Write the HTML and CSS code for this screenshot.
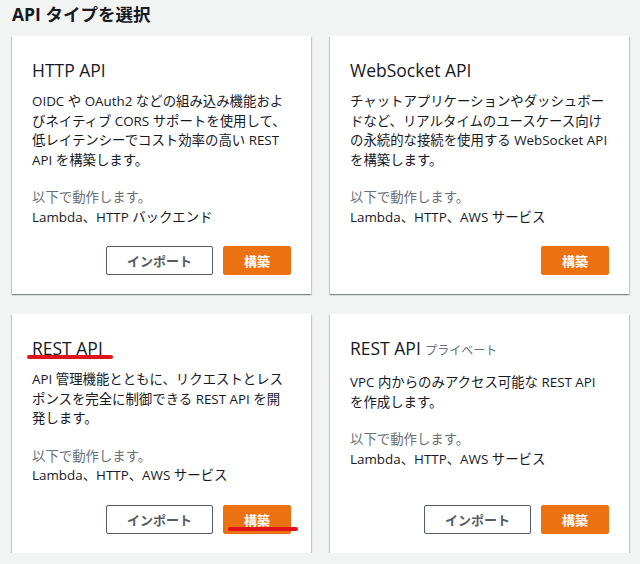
FILE: index.html
```html
<!DOCTYPE html>
<html lang="ja">
<head>
	<meta charset="utf-8">
	<title>API タイプを選択</title>
	<link rel="stylesheet" href="styles.css">
</head>
<body>
<div class="page">
    <h1 class="page-title">API タイプを選択</h1>

    <div class="api-grid">
        <div class="card">
            <h2 class="card-title">HTTP API</h2>
            <p class="card-desc">OIDC や OAuth2 などの組み込み機能およびネイティブ CORS サポートを使用して、低レイテンシーでコスト効率の高い REST API を構築します。</p>
            <p class="works-with">
                <span class="works-label">以下で動作します。</span>
                <span>Lambda、HTTP バックエンド</span>
            </p>
            <div class="actions">
                <button class="btn btn-normal">インポート</button>
                <button class="btn btn-primary">構築</button>
            </div>
        </div>

        <div class="card">
            <h2 class="card-title">WebSocket API</h2>
            <p class="card-desc">チャットアプリケーションやダッシュボードなど、リアルタイムのユースケース向けの永続的な接続を使用する WebSocket API を構築します。</p>
            <p class="works-with">
                <span class="works-label">以下で動作します。</span>
                <span>Lambda、HTTP、AWS サービス</span>
            </p>
            <div class="actions">
                <button class="btn btn-primary">構築</button>
            </div>
        </div>

        <div class="card">
            <h2 class="card-title">REST API<span class="mark mark-title"></span></h2>
            <p class="card-desc">API 管理機能とともに、リクエストとレスポンスを完全に制御できる REST API を開発します。</p>
            <p class="works-with">
                <span class="works-label">以下で動作します。</span>
                <span>Lambda、HTTP、AWS サービス</span>
            </p>
            <div class="actions">
                <button class="btn btn-normal">インポート</button>
                <button class="btn btn-primary">構築<span class="mark mark-btn"></span></button>
            </div>
        </div>

        <div class="card">
            <h2 class="card-title">REST API <small class="card-sub">プライベート</small></h2>
            <p class="card-desc">VPC 内からのみアクセス可能な REST API を作成します。</p>
            <p class="works-with">
                <span class="works-label">以下で動作します。</span>
                <span>Lambda、HTTP、AWS サービス</span>
            </p>
            <div class="actions">
                <button class="btn btn-normal">インポート</button>
                <button class="btn btn-primary">構築</button>
            </div>
        </div>
    </div>
</div>
</body>
</html>
```

FILE: styles.css
```css
* {
	margin: 0;
	padding: 0;
	box-sizing: border-box;
}

body {
	background-color: #f2f3f3;
	color: #16191f;
	font-family: "Open Sans", "Noto Sans CJK JP", sans-serif;
	font-size: 13.4px;
}

.page {
	padding: 0 11px 0 12px;
}

.page-title {
	font-size: 17.5px;
	font-weight: 700;
	line-height: 28px;
	margin-bottom: 8px;
}

.api-grid {
	display: grid;
	grid-template-columns: 299px 299px;
	column-gap: 19px;
	row-gap: 20px;
}

.card {
	background-color: #fff;
	display: flex;
	flex-direction: column;
	padding: 22px 20px 19px 20px;
	box-shadow: 0 1px 1px 0 rgba(0, 28, 36, 0.3),
		1px 1px 1px 0 rgba(0, 28, 36, 0.15),
		-1px 1px 1px 0 rgba(0, 28, 36, 0.15);
}

.card-title {
	position: relative;
	font-size: 17.5px;
	font-weight: 400;
	line-height: 24px;
	margin-bottom: 10px;
}

.card-sub {
	font-size: 12px;
	color: #687078;
	font-weight: 400;
}

.card-desc {
	line-height: 19.5px;
	margin-bottom: 18px;
}

.works-with {
	line-height: 19.5px;
	margin-bottom: 19px;
}

.works-with span {
	display: block;
}

.works-label {
	color: #687078;
}

.actions {
	margin-top: auto;
	display: flex;
	justify-content: flex-end;
	gap: 10px;
}

.btn {
	position: relative;
	height: 29px;
	padding: 0 20px;
	border-radius: 2px;
	font-family: "Open Sans", "Noto Sans CJK JP", sans-serif;
	font-size: 13px;
	font-weight: 700;
	cursor: pointer;
}

.btn-normal {
	background-color: #fff;
	border: 1px solid #545b64;
	color: #545b64;
}

.btn-primary {
	background-color: #ec7211;
	border: 1px solid #ec7211;
	color: #fff;
}

/* red hand-drawn marks */
.mark {
	position: absolute;
	height: 4px;
	border-radius: 2px;
	background-color: #e0131b;
}

.mark-title {
	left: -5px;
	top: 19px;
	width: 86px;
}

.mark-btn {
	left: 4px;
	top: 21px;
	width: 70px;
}
```
